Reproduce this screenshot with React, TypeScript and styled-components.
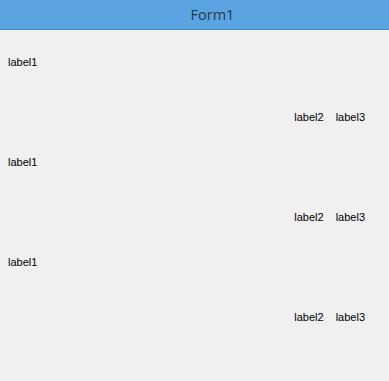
import React, { FunctionComponent } from 'react';
import styled, { createGlobalStyle } from 'styled-components';

const GlobalStyle = createGlobalStyle`
  html, body {
    margin: 0;
    padding: 0;
    background: #f0f0f0;
  }
`;

const groups = [1, 2, 3];

const App: FunctionComponent<{}> = () => {
  return (
    <Window>
      <GlobalStyle />
      <TitleBar>
        <Title>Form1</Title>
      </TitleBar>
      <Content>
        {groups.map((g) => (
          <Group key={g}>
            <Label>label1</Label>
            <RightRow>
              <Label>label2</Label>
              <Label>label3</Label>
            </RightRow>
          </Group>
        ))}
      </Content>
    </Window>
  );
};

const Window = styled.div`
  width: 389px;
  height: 381px;
  background: #f0f0f0;
  overflow: hidden;
  display: flex;
  flex-direction: column;
`;

const TitleBar = styled.div`
  height: 29px;
  background: #5ca3e1;
  border-bottom: 1px solid #4a8ccb;
  display: flex;
  align-items: center;
  justify-content: center;
  padding-left: 36px;
`;

const Title = styled.span`
  font-family: 'Open Sans', 'Noto Sans', sans-serif;
  font-size: 14.5px;
  color: #233a52;
`;

const Content = styled.div`
  display: flex;
  flex-direction: column;
  padding-top: 26px;
`;

const Group = styled.div`
  height: 100px;
  display: flex;
  flex-direction: column;
`;

const Label = styled.span`
  font-family: 'Liberation Sans', Arial, sans-serif;
  font-size: 11px;
  line-height: 13px;
  color: #000;
  padding-left: 8px;
`;

const RightRow = styled.div`
  margin-top: 42px;
  display: flex;
  justify-content: flex-end;
  gap: 4px;
  padding-right: 24px;
`;

export default App;
